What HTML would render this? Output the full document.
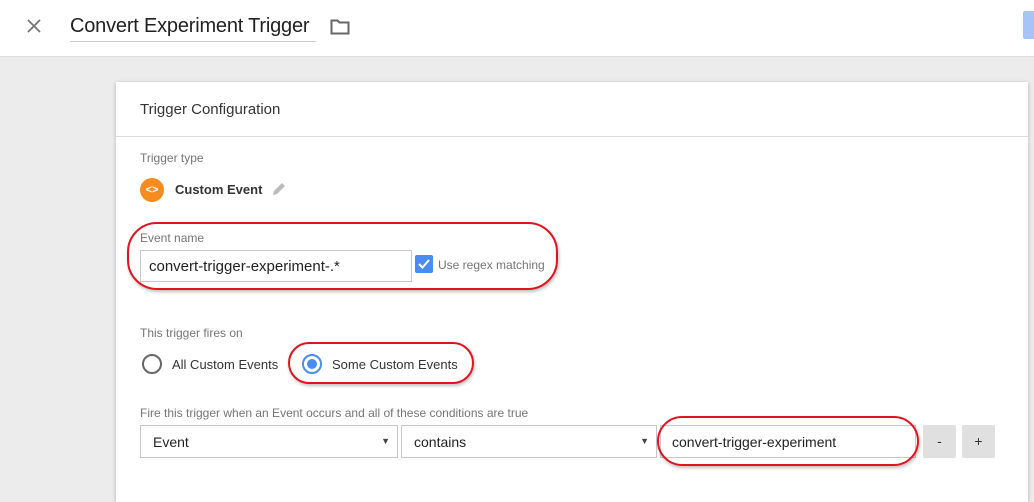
<!DOCTYPE html>
<html><head><meta charset="utf-8"><style>
*{margin:0;padding:0;box-sizing:border-box}
body{width:1034px;height:482px;overflow:hidden;background:#ececec;font-family:"Liberation Sans",Arial,sans-serif;position:relative;color:#212121}
.top{position:absolute;left:0;top:0;width:1034px;height:57px;background:#fff;border-bottom:1px solid #dcdcdc}
.abs{position:absolute}
.card{position:absolute;left:116px;top:82px;width:912px;height:420px;background:#fff;box-shadow:0 1px 4px rgba(0,0,0,.25)}
.lbl{font-size:12px;color:#757575}
.oval{position:absolute;border:2px solid #e0141e;border-radius:30px;box-shadow:1px 2px 3px rgba(0,0,0,.25)}
.sel{position:absolute;height:33px;border:1px solid #c8c8c8;background:#fff;font-size:14px;padding:8px 12px;color:#222}
.arr:after{content:"▼";position:absolute;right:7px;top:10px;font-size:9px;color:#444}
.btn{position:absolute;width:33px;height:33px;background:#e0e0e0;border-radius:2px;font-size:14px;text-align:center;line-height:33px;color:#333}
</style></head><body>
<div class="top">
 <svg class="abs" style="left:26px;top:18px" width="16" height="16" viewBox="0 0 16 16"><path d="M2 2L14 14M14 2L2 14" stroke="#757575" stroke-width="1.8"/></svg>
 <div class="abs" style="left:70px;top:15px;font-size:20px;letter-spacing:-0.2px;color:#212121">Convert Experiment Trigger</div>
 <div class="abs" style="left:70px;top:41px;width:246px;height:1px;background:#ccc"></div>
 <svg class="abs" style="left:330px;top:18px" width="20" height="17" viewBox="0 0 20 17"><path d="M1.5 2.5h6l2 2h9v11h-17z" fill="none" stroke="#666" stroke-width="2"/></svg>
 <div class="abs" style="left:1023px;top:11px;width:14px;height:28px;background:#a6c4f8;border-radius:2px"></div>
</div>
<div class="card">
 <div class="abs" style="left:24px;top:19px;font-size:15px;color:#333">Trigger Configuration</div>
 <div class="abs" style="left:0;top:54px;width:912px;height:1px;background:#dcdcdc"></div>
 <div class="abs lbl" style="left:24px;top:69px">Trigger type</div>
 <div class="abs" style="left:24px;top:96px;width:24px;height:24px;border-radius:50%;background:#f68b1f;color:#fff;font-size:11px;font-weight:bold;text-align:center;line-height:24px">&lt;&gt;</div>
 <div class="abs" style="left:59px;top:100px;font-size:13px;font-weight:bold;color:#333">Custom Event</div>
 <svg class="abs" style="left:155px;top:99px" width="16" height="16" viewBox="0 0 16 16"><path d="M2 14l1-4 8-8 3 3-8 8z" fill="#bbb"/></svg>
 <div class="abs lbl" style="left:24px;top:149px">Event name</div>
 <div class="abs" style="left:24px;top:168px;width:272px;height:32px;border:1px solid #c8c8c8;font-size:15px;padding:7px 8px;color:#222">convert-trigger-experiment-.*</div>
 <div class="abs" style="left:299px;top:173px;width:18px;height:18px;background:#4a8cf0;border-radius:2px"><svg width="18" height="18"><path d="M4 9l3.5 3.5L14 5" stroke="#fff" stroke-width="2" fill="none"/></svg></div>
 <div class="abs lbl" style="left:322px;top:176px">Use regex matching</div>
 <div class="abs lbl" style="left:24px;top:244px">This trigger fires on</div>
 <div class="abs" style="left:26px;top:272px;width:20px;height:20px;border:2px solid #666;border-radius:50%"></div>
 <div class="abs" style="left:56px;top:275px;font-size:13px;color:#333">All Custom Events</div>
 <div class="abs" style="left:186px;top:272px;width:20px;height:20px;border:2px solid #4a8cf0;border-radius:50%"><div style="margin:3px;width:10px;height:10px;border-radius:50%;background:#4a8cf0"></div></div>
 <div class="abs" style="left:216px;top:275px;font-size:13px;color:#333">Some Custom Events</div>
 <div class="abs lbl" style="left:24px;top:324px">Fire this trigger when an Event occurs and all of these conditions are true</div>
 <div class="sel arr" style="left:24px;top:343px;width:258px">Event</div>
 <div class="sel arr" style="left:285px;top:343px;width:256px">contains</div>
 <div class="sel" style="left:544px;top:343px;width:256px;padding-left:11px">convert-trigger-experiment</div>
 <div class="btn" style="left:807px;top:343px">-</div>
 <div class="btn" style="left:846px;top:343px">+</div>
</div>
<div class="oval" style="left:127px;top:222px;width:431px;height:68px"></div>
<div class="oval" style="left:288px;top:342px;width:186px;height:42px"></div>
<div class="oval" style="left:657px;top:416px;width:262px;height:50px"></div>
</body></html>
